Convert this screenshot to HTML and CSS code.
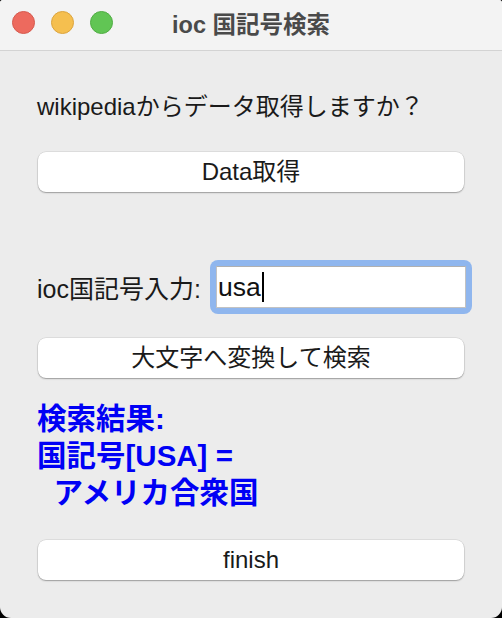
FILE: index.html
```html
<!DOCTYPE html>
<html lang="ja">
<head>
<meta charset="utf-8">
<title>ioc 国記号検索</title>
<link rel="stylesheet" href="styles.css">
</head>
<body>
<div class="window">
  <div class="titlebar">
    <div class="lights">
      <span class="light red"></span>
      <span class="light yellow"></span>
      <span class="light green"></span>
    </div>
    <div class="title">ioc 国記号検索</div>
    <div></div>
  </div>
  <div class="content">
    <div class="prompt">wikipediaからデータ取得しますか？</div>
    <div class="btn btn-data">Data取得</div>
    <div class="row">
      <div class="label">ioc国記号入力:</div>
      <div class="field-ring">
        <div class="field">usa<span class="caret"></span></div>
      </div>
    </div>
    <div class="btn btn-search">大文字へ変換して検索</div>
    <div class="result">検索結果:
国記号[USA] =
  アメリカ合衆国</div>
    <div class="btn btn-finish">finish</div>
  </div>
</div>
</body>
</html>
```

FILE: styles.css
```css
html {
  background: #000;
}
body {
  margin: 0;
  font-family: "Liberation Sans", "Noto Sans CJK JP", sans-serif;
  color: #1a1a1a;
}
.window {
  width: 502px;
  height: 618px;
  background: #ececec;
  border-radius: 3px 3px 11px 11px;
  overflow: hidden;
}
.titlebar {
  height: 50px;
  background: #f3f3f3;
  border-bottom: 1px solid #d3d3d3;
  display: grid;
  grid-template-columns: 1fr auto 1fr;
  align-items: center;
}
.lights {
  display: flex;
  gap: 16px;
  padding-left: 12px;
  margin-top: -5px;
}
.light {
  width: 23px;
  height: 23px;
  border-radius: 50%;
  box-sizing: border-box;
}
.red { background: #ed6a5e; border: 1px solid #d65a4e; }
.yellow { background: #f5bf4f; border: 1px solid #dca43d; }
.green { background: #61c554; border: 1px solid #50ad43; }
.title {
  font-size: 23.5px;
  font-weight: bold;
  color: #4a4a4a;
  margin-top: -4px;
}
.content {
  padding: 0 38px 0 37px;
}
.prompt {
  margin-top: 41px;
  height: 30px;
  line-height: 30px;
  font-size: 24px;
}
.btn {
  height: 40px;
  line-height: 40px;
  background: #fff;
  border-radius: 8px;
  box-shadow: 0 1px 1.5px rgba(0,0,0,0.3), 0 0 0 0.5px rgba(0,0,0,0.12);
  text-align: center;
  font-size: 24px;
  margin-left: 1px;
}
.btn-data { margin-top: 30px; }
.row {
  margin-top: 68px;
  height: 54px;
  display: flex;
  align-items: center;
  margin-right: -8px;
}
.label {
  font-size: 25px;
  width: 173px;
}
.field-ring {
  flex: 1;
  padding: 6px;
  background: #8fb6ee;
  border-radius: 8px;
}
.field {
  height: 42px;
  box-sizing: border-box;
  background: #fff;
  border: 1px solid #c2c2c2;
  border-top-color: #b0b0b0;
  padding-left: 1px;
  font-size: 26.5px;
  line-height: 38px;
  display: flex;
  align-items: center;
  color: #111;
}
.caret {
  display: inline-block;
  width: 2px;
  height: 30px;
  background: #000;
  margin-left: 1px;
}
.btn-search { margin-top: 24px; }
.result {
  margin-top: 22px;
  white-space: pre;
  font-size: 29.5px;
  line-height: 37px;
  font-weight: bold;
  color: #0000f5;
}
.btn-finish { margin-top: 29px; }
```
